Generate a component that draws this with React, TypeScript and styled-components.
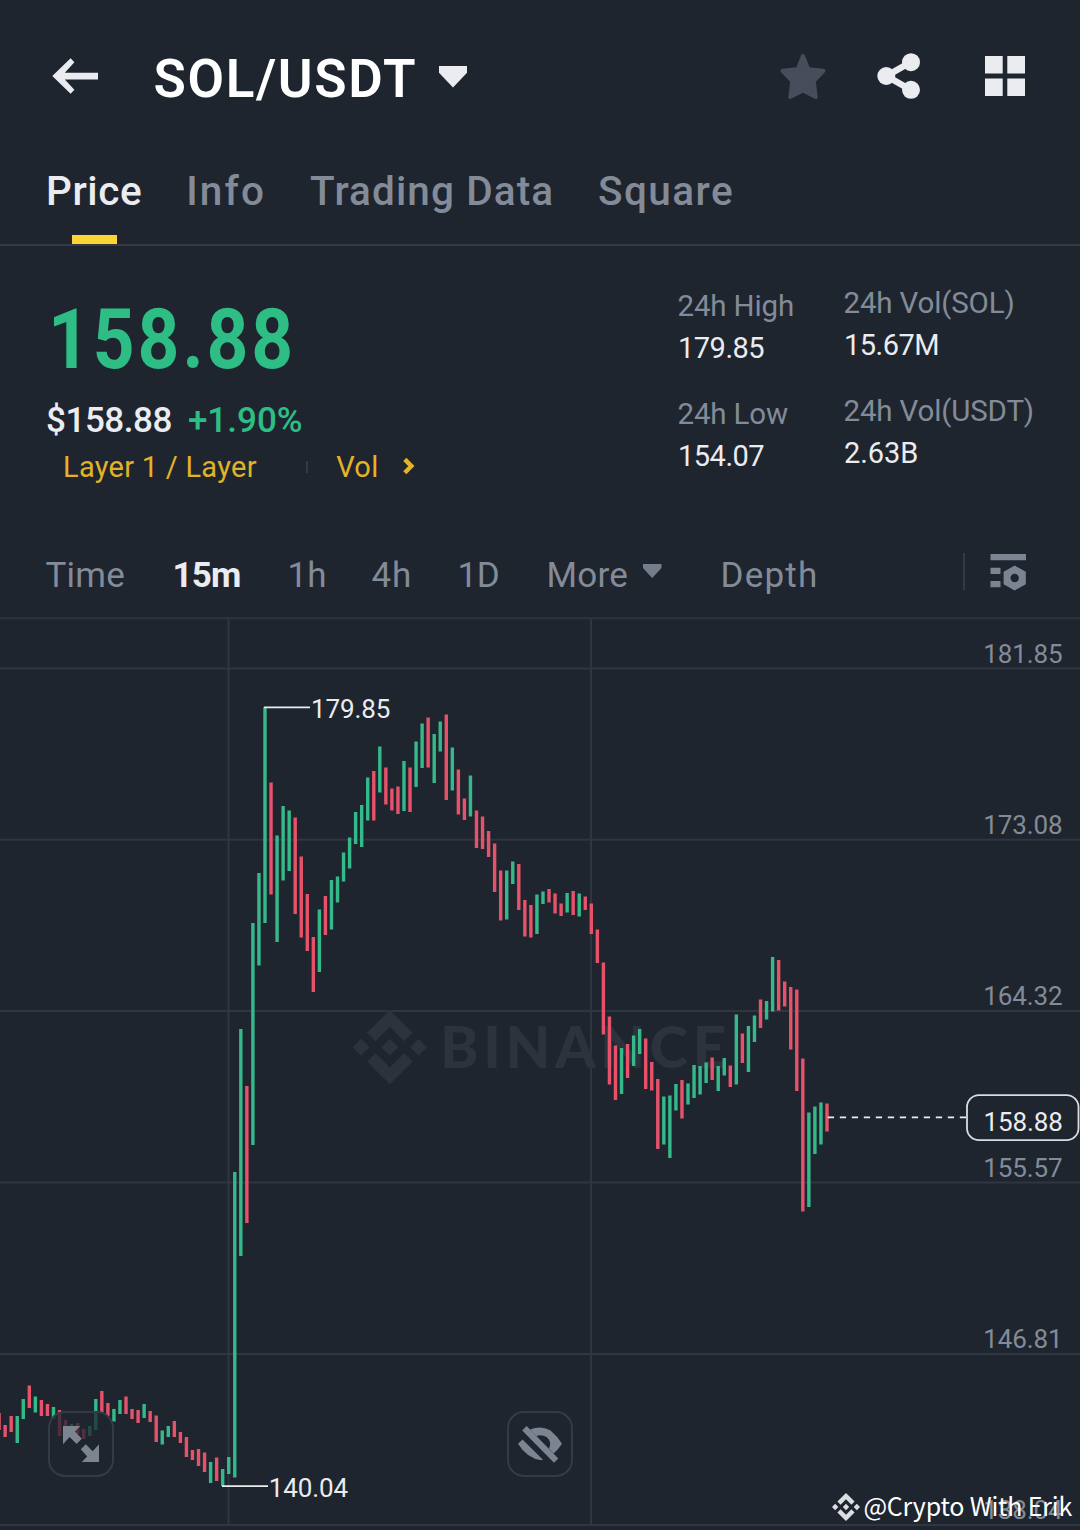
import React from "react";
import styled, { createGlobalStyle } from "styled-components";

const color = {
  bg: "#1f252f",
  line: "#333a45",
  grid: "#2f3641",
  text: "#eaecef",
  muted: "#848b98",
  up: "#2ebd85",
  candleUp: "#36b98a",
  candleDown: "#e5526a",
  yellow: "#fcd535",
  gold: "#e2b228",
};

const GlobalStyle = createGlobalStyle`
  body {
    margin: 0;
    background: ${color.bg};
    color: ${color.text};
    font-family: Roboto, "Liberation Sans", sans-serif;
  }
`;

const Page = styled.main`
  display: flex;
  flex-direction: column;
  width: 1080px;
  height: 1530px;
  overflow: hidden;
  background: ${color.bg};
`;

/* ---------- header ---------- */

const Header = styled.header`
  display: flex;
  align-items: center;
  height: 152px;
  padding: 0 54px 0 52px;
  flex: none;
`;

const Title = styled.h1`
  margin: 6px 0 0 55.5px;
  font-size: 53px;
  line-height: 60px;
  font-weight: 600;
  letter-spacing: 1.65px;
  color: #fff;
`;

const Icon = styled.svg`
  display: block;
  flex: none;
`;

const PairCaret = styled(Icon)`
  margin: 1px 0 0 21.5px;
`;

const HeaderActions = styled.div`
  display: flex;
  align-items: center;
  gap: 51px;
  margin-left: auto;
`;

const GridIcon = styled(Icon)`
  margin-left: 13px;
`;

/* ---------- tabs ---------- */

const TabBar = styled.nav`
  display: flex;
  gap: 43.8px;
  height: 92px;
  padding-left: 46px;
  border-bottom: 2px solid ${color.line};
  flex: none;
`;

const Tab = styled.div<{ $active?: boolean; $spacing: number }>`
  display: flex;
  flex-direction: column;
  align-items: center;
  justify-content: space-between;
  padding-top: 14px;
  font-size: 40.5px;
  line-height: 50px;
  font-weight: 500;
  white-space: nowrap;
  letter-spacing: ${(p) => p.$spacing}px;
  color: ${(p) => (p.$active ? color.text : color.muted)};
`;

const TabIndicator = styled.span`
  width: 45px;
  height: 9px;
  background: ${color.yellow};
`;

/* ---------- price summary ---------- */

const Summary = styled.section`
  display: flex;
  height: 282px;
  flex: none;
`;

const PriceColumn = styled.div`
  width: 630.5px;
  padding: 49px 0 0 47px;
  box-sizing: border-box;
  margin-right: 47px;
`;

const LastPrice = styled.div`
  margin-left: 1px;
  font-size: 83px;
  line-height: 90px;
  font-weight: 700;
  letter-spacing: 3.3px;
  color: ${color.up};
  transform: scaleX(0.88);
  transform-origin: left center;
`;

const FiatRow = styled.div`
  display: flex;
  gap: 16px;
  margin: 15px 0 7px -1px;
  font-size: 35px;
  line-height: 42px;
  font-weight: 500;
`;

const Fiat = styled.span`
  letter-spacing: -0.45px;
`;

const Change = styled.span`
  color: ${color.up};
`;

const TagRow = styled.div`
  display: flex;
  align-items: center;
  padding-left: 16px;
  font-size: 29px;
  line-height: 36px;
  letter-spacing: 0.27px;
  color: ${color.gold};
`;

const TagDivider = styled.span`
  width: 2.5px;
  height: 12px;
  margin: 0 28px 0 49px;
  background: ${color.line};
`;

const TagChevron = styled(Icon)`
  margin: -2px 0 0 24px;
`;

const StatColumn = styled.div<{ $top: number; $width?: number }>`
  display: flex;
  flex-direction: column;
  gap: 28px;
  width: ${(p) => (p.$width ? `${p.$width}px` : "auto")};
  padding-top: ${(p) => p.$top}px;
  flex: none;
`;

const Stat = styled.div`
  display: flex;
  flex-direction: column;
  gap: 4px;
  line-height: 38px;
  white-space: nowrap;
`;

const StatLabel = styled.span`
  font-size: 29.5px;
  letter-spacing: -0.15px;
  color: ${color.muted};
`;

const StatValue = styled.span<{ $spacing: number }>`
  padding-left: 0.5px;
  font-size: 29px;
  letter-spacing: ${(p) => p.$spacing}px;
`;

/* ---------- interval bar ---------- */

const IntervalBar = styled.nav`
  display: flex;
  height: 62px;
  padding: 27px 54px 0 45.5px;
  flex: none;
  font-size: 35px;
  line-height: 42px;
`;

const Interval = styled.span<{ $width: number; $active?: boolean; $spacing?: number }>`
  display: flex;
  width: ${(p) => p.$width}px;
  flex: none;
  font-weight: ${(p) => (p.$active ? 700 : 400)};
  letter-spacing: ${(p) => p.$spacing ?? 0.2}px;
  color: ${(p) => (p.$active ? color.text : color.muted)};
`;

const MoreCaret = styled(Icon)`
  margin: 9px 0 0 15px;
`;

const IntervalTools = styled.div`
  display: flex;
  gap: 25px;
  margin: -1px 0 0 auto;
`;

const ToolDivider = styled.span`
  width: 2px;
  height: 37px;
  margin-top: -1px;
  background: ${color.line};
`;

/* ---------- chart ---------- */

const ChartArea = styled.section`
  position: relative;
  height: 913px;
  flex: none;
`;

const Plot = styled.svg`
  display: block;
`;

const AxisText = styled.text`
  font-size: 26px;
  letter-spacing: -0.1px;
  fill: ${color.muted};
`;

const MarkText = styled(AxisText)`
  letter-spacing: -0.1px;
  fill: ${color.text};
`;

const WatermarkText = styled.text`
  font-family: Lato, "Open Sans", sans-serif;
  font-size: 58px;
  font-weight: 900;
  fill: #2c333e;
`;

const FloatingButton = styled.button<{ $left: number }>`
  position: absolute;
  left: ${(p) => p.$left}px;
  top: 794px;
  display: flex;
  align-items: center;
  justify-content: center;
  width: 66px;
  height: 66px;
  padding: 0;
  border: 2.5px solid #343b46;
  border-radius: 17px;
  background: rgba(31, 37, 47, 0.75);
`;

const Credit = styled.div`
  position: absolute;
  right: 8px;
  bottom: 7px;
  display: flex;
  align-items: center;
  gap: 3.5px;
  font-family: "Noto Sans CJK SC", "Noto Sans", sans-serif;
  font-size: 25px;
  line-height: 36px;
  letter-spacing: -0.2px;
  white-space: nowrap;
  color: #fff;
`;

const CreditLogo = styled(Icon)`
  margin-top: 3px;
`;

const LOGO =
  "M16.624 13.9202l2.7175 2.7154-7.353 7.353-7.353-7.352 2.7175-2.7164 4.6355 4.6595 4.6356-4.6595zm4.6366-4.6366L24 12l-2.7154 2.7164L18.5682 12l2.6924-2.7164zm-9.272.001l2.7163 2.6914-2.7164 2.7174v-.001L9.2721 12l2.7164-2.7154zm-9.2722-.001L5.4088 12l-2.6914 2.6924L0 12l2.7164-2.7164zM11.9885.0115l7.353 7.329-2.7174 2.7154-4.6356-4.6356-4.6355 4.6595-2.7174-2.7154 7.353-7.353z";

type Candle = ["u" | "d", number, number];

const candles: Candle[] = [
  ["d", 1413, 1430], ["d", 1425, 1437], ["d", 1416, 1432], ["u", 1416, 1443], ["u", 1399, 1419],
  ["d", 1385.5, 1408], ["u", 1396.5, 1412.5], ["d", 1400, 1416], ["d", 1404, 1416], ["u", 1407, 1419],
  ["d", 1410, 1436], ["d", 1420, 1436], ["u", 1424, 1436], ["d", 1423, 1434], ["d", 1429, 1439],
  ["u", 1426, 1436], ["u", 1399, 1430], ["d", 1391, 1412], ["d", 1403, 1416], ["u", 1409, 1421.5],
  ["u", 1400, 1414], ["d", 1396.5, 1414], ["d", 1409, 1419], ["d", 1410, 1423], ["u", 1404, 1418],
  ["d", 1411, 1422], ["d", 1415.5, 1442], ["u", 1430.5, 1444.5], ["u", 1426, 1437], ["d", 1421, 1437],
  ["d", 1432, 1443], ["d", 1437, 1457], ["d", 1450, 1460], ["d", 1449, 1466], ["d", 1452.5, 1472],
  ["u", 1462, 1483], ["d", 1457.5, 1481], ["u", 1469, 1486], ["u", 1457, 1474], ["u", 1172, 1477.5],
  ["u", 1029, 1256], ["d", 1086, 1223], ["u", 923, 1145], ["u", 873, 965.5], ["u", 707, 923],
  ["d", 782.5, 894.5], ["u", 835.5, 942], ["u", 806, 880.5], ["u", 810.5, 871], ["d", 817.5, 914],
  ["d", 856.5, 937.5], ["d", 894, 951], ["d", 937, 992], ["u", 909.5, 972], ["d", 896, 935],
  ["u", 880, 929.5], ["u", 876.5, 902.5], ["u", 852.5, 881.5], ["u", 837.5, 868.5], ["u", 812, 844],
  ["u", 805, 847], ["u", 777.5, 820.5], ["d", 771, 820.5], ["u", 746.5, 792.5], ["d", 767.5, 804.5],
  ["d", 788.5, 810.5], ["d", 786.5, 814], ["u", 761, 811], ["d", 767.5, 812], ["u", 741.5, 787],
  ["u", 723.5, 768], ["d", 717.5, 767.5], ["u", 734, 783], ["u", 721.5, 751.5], ["d", 714.5, 800],
  ["u", 747.5, 790.5], ["d", 769.5, 814.5], ["d", 798.5, 820], ["u", 775.5, 816.5], ["d", 810.5, 848],
  ["d", 816.5, 849], ["d", 831, 857], ["d", 843.5, 892], ["d", 870.5, 920.5], ["u", 870.5, 919.5],
  ["u", 861.5, 884], ["d", 864, 910], ["d", 900, 936.5], ["d", 905, 937.5], ["u", 894.5, 934],
  ["u", 891.5, 904], ["d", 889, 902.5], ["d", 893.5, 913.5], ["d", 903.5, 916], ["u", 893, 912.5],
  ["d", 891, 915], ["u", 893.5, 916.5], ["d", 896.5, 910], ["d", 903.5, 934], ["d", 929.5, 963],
  ["d", 962.5, 1034.5], ["d", 1016.5, 1084.5], ["d", 1045.5, 1100], ["u", 1048, 1094], ["d", 1044, 1078],
  ["u", 1035.5, 1066], ["u", 1029, 1054], ["d", 1038.5, 1089], ["d", 1062, 1090.5], ["d", 1079, 1149],
  ["u", 1096.5, 1144.5], ["u", 1095.5, 1158], ["u", 1084, 1110.5], ["d", 1080, 1118.5], ["u", 1083.5, 1104.5],
  ["u", 1065, 1098], ["u", 1066, 1094.5], ["u", 1062.5, 1083], ["d", 1057.5, 1080], ["u", 1066, 1091],
  ["u", 1058, 1075.5], ["d", 1065.5, 1087], ["u", 1014.5, 1084.5], ["d", 1033.5, 1063], ["u", 1026, 1072],
  ["u", 1015.5, 1042], ["d", 999.5, 1028], ["u", 1001, 1019.5], ["u", 957, 1011.5], ["d", 960, 1010.5],
  ["d", 981.5, 1006.5], ["d", 987, 1049.5], ["d", 989.5, 1091], ["d", 1058.5, 1211.5], ["u", 1112.5, 1207],
  ["u", 1106.5, 1154], ["u", 1102.5, 1144.5], ["d", 1103.5, 1131.5],
];

const FIRST_X = -0.9;
const STEP = 6.043;

const axis = [
  { y: 668.5, label: "181.85" },
  { y: 839.7, label: "173.08" },
  { y: 1011, label: "164.32" },
  { y: 1182.5, label: "155.57" },
  { y: 1354, label: "146.81" },
  { y: 1525, label: "138.04" },
];

const tabs = [
  { label: "Price", spacing: 0.6, active: true },
  { label: "Info", spacing: 2.2 },
  { label: "Trading Data", spacing: 1.1 },
  { label: "Square", spacing: 1.45 },
];

function Chart() {
  return (
    <Plot width="1080" height="913" viewBox="0 617 1080 913">
      <rect x="0" y="616.5" width="1080" height="3" fill="#2b313c" />
      {axis.map((a) => (
        <rect key={a.label} x="0" y={a.y - 1} width="1080" height="2" fill={color.grid} />
      ))}
      {[228.5, 591].map((x) => (
        <rect key={x} x={x - 1} y="619" width="2" height="906" fill={color.grid} />
      ))}
      <path d={LOGO} fill="#2c333e" transform="translate(352.7 1010) scale(3.1)" />
      <WatermarkText x="440" y="1068" textLength="286">BINANCE</WatermarkText>
      {candles.map(([dir, top, bottom], i) => (
        <rect
          key={i}
          x={FIRST_X + i * STEP - 1.7}
          y={top}
          width="3.4"
          height={bottom - top}
          fill={dir === "u" ? color.candleUp : color.candleDown}
        />
      ))}
      {axis.map((a) => (
        <AxisText key={a.label} x="983.3" y={a.y - 6}>{a.label}</AxisText>
      ))}
      <path d="M264 707.3H310M222 1486.2H268" stroke={color.text} strokeWidth="1.8" />
      <MarkText x="311" y="717.7">179.85</MarkText>
      <MarkText x="268.7" y="1497">140.04</MarkText>
      <path d="M827.8 1117.4H966" stroke={color.text} strokeWidth="1.8" strokeDasharray="6.3 5.7" />
      <rect x="967" y="1095.2" width="111.5" height="45" rx="12" fill={color.bg} stroke="#d9dce1" strokeWidth="1.8" />
      <MarkText x="983.5" y="1130.7">158.88</MarkText>
    </Plot>
  );
}

export default function App() {
  return (
    <>
      <GlobalStyle />
      <Page>
        <Header>
          <Icon width="46" height="36" viewBox="52 58 46 36" fill={color.text}>
            <path d="M52.3 76L70.6 58.2L74.4 62.2L64.8 72.7H98V79.6H64.8L74.4 89.8L70.6 93.8Z" />
          </Icon>
          <Title>SOL/USDT</Title>
          <PairCaret width="28" height="22" viewBox="439 66 28 22" fill={color.text}>
            <path d="M439 66H467V72.7L453 87.4L439 72.7Z" />
          </PairCaret>
          <HeaderActions>
            <Icon width="46" height="46" viewBox="780 53 46 46">
              <path
                d="M803 56L808.3 69.2L823.4 70.8L813.8 81.2L815.7 97L803 90.4L790.3 97L792.2 81.2L782.6 70.8L797.7 69.2Z"
                fill="#474d5a"
                stroke="#474d5a"
                strokeWidth="4"
                strokeLinejoin="round"
              />
            </Icon>
            <Icon width="44" height="46" viewBox="877 53 44 46">
              <path d="M911 62L886.5 76L911 90" fill="none" stroke={color.text} strokeWidth="6.6" />
              <g fill={color.text}>
                <circle cx="911" cy="62.2" r="9" />
                <circle cx="886.3" cy="76" r="9" />
                <circle cx="911" cy="89.8" r="9" />
              </g>
            </Icon>
            <GridIcon width="41" height="40" viewBox="985 56 41 40" fill={color.text}>
              <path d="M985 56h17.7v17.4H985zM1007.3 56h17.7v17.4h-17.7zM985 78.6h17.7V96H985zM1007.3 78.6h17.7V96h-17.7z" />
            </GridIcon>
          </HeaderActions>
        </Header>

        <TabBar>
          {tabs.map((t) => (
            <Tab key={t.label} $active={t.active} $spacing={t.spacing}>
              {t.label}
              {t.active && <TabIndicator />}
            </Tab>
          ))}
        </TabBar>

        <Summary>
          <PriceColumn>
            <LastPrice>158.88</LastPrice>
            <FiatRow>
              <Fiat>$158.88</Fiat>
              <Change>+1.90%</Change>
            </FiatRow>
            <TagRow>
              <span>Layer 1 / Layer</span>
              <TagDivider />
              <span>Vol</span>
              <TagChevron width="13" height="18" viewBox="402 457 13 18">
                <path d="M404.8 459.4L411.4 466.1L404.8 472.8" fill="none" stroke={color.gold} strokeWidth="4.4" />
              </TagChevron>
            </TagRow>
          </PriceColumn>
          <StatColumn $top={41} $width={166}>
            <Stat>
              <StatLabel>24h High</StatLabel>
              <StatValue $spacing={-0.5}>179.85</StatValue>
            </Stat>
            <Stat>
              <StatLabel>24h Low</StatLabel>
              <StatValue $spacing={-0.5}>154.07</StatValue>
            </Stat>
          </StatColumn>
          <StatColumn $top={38}>
            <Stat>
              <StatLabel>24h Vol(SOL)</StatLabel>
              <StatValue $spacing={-0.5}>15.67M</StatValue>
            </Stat>
            <Stat>
              <StatLabel>24h Vol(USDT)</StatLabel>
              <StatValue $spacing={-0.1}>2.63B</StatValue>
            </Stat>
          </StatColumn>
        </Summary>

        <IntervalBar>
          <Interval $width={127}>Time</Interval>
          <Interval $width={115} $active $spacing={-0.8}>15m</Interval>
          <Interval $width={84} $spacing={0}>1h</Interval>
          <Interval $width={86} $spacing={0.8}>4h</Interval>
          <Interval $width={89} $spacing={-0.3}>1D</Interval>
          <Interval $width={174}>
            More
            <MoreCaret width="19" height="14" viewBox="642 564 19 14" fill="#767d8a">
              <path d="M642 564H660.5V568L651.2 578L642 568Z" />
            </MoreCaret>
          </Interval>
          <Interval $width={110} $spacing={1.2}>Depth</Interval>
          <IntervalTools>
            <ToolDivider />
            <Icon width="36" height="37" viewBox="990 554 36 37" fill="#7d8491">
              <path d="M990.5 554h35.5v6.3h-35.5zM990.5 567.8h10v6.2h-10zM990.5 581h10v6.2h-10z" />
              <path
                fillRule="evenodd"
                d="M1014.7 565.6L1025.8 571.8V584.2L1014.7 590.4L1003.6 584.2V571.8ZM1014.7 573.8a4.2 4.2 0 1 0 0 8.4a4.2 4.2 0 1 0 0-8.4Z"
              />
            </Icon>
          </IntervalTools>
        </IntervalBar>

        <ChartArea>
          <Chart />
          <FloatingButton $left={48} aria-label="Expand">
            <Icon width="38" height="38" viewBox="62 1425 38 38" fill="#7d8491">
              <path d="M63 1426H80.3L75 1431.5L81.8 1438.8L76.6 1444L69.6 1436.9L63 1444.2Z" />
              <path d="M99 1462H81.7L87.2 1456.5L80.8 1449.3L85.8 1444.2L92.7 1451.3L99 1444.2Z" />
            </Icon>
          </FloatingButton>
          <FloatingButton $left={507} aria-label="Hide drawings">
            <Icon width="46" height="38" viewBox="517 1425 46 38" fill="#7d8491">
              <path d="M522.2 1430.4L526.6 1426L558.3 1458.4L554 1462.7Z" />
              <path
                fillRule="evenodd"
                d="M530 1429.6Q541 1425 550.5 1430.6Q557.5 1436.5 562 1443.8Q558.5 1449.3 553.6 1453.6ZM536.3 1436L549 1448.8Q552.5 1441.5 546.5 1437Q541.5 1434 536.3 1436Z"
              />
              <path d="M522.5 1439.4L518 1443.8Q527 1458.5 541.5 1460.3L543 1459.8Z" />
            </Icon>
          </FloatingButton>
          <Credit>
            <CreditLogo width="28" height="28" viewBox="0 0 24 24" fill="#dcdee2">
              <path d={LOGO} />
            </CreditLogo>
            @Crypto With Erik
          </Credit>
        </ChartArea>
      </Page>
    </>
  );
}
